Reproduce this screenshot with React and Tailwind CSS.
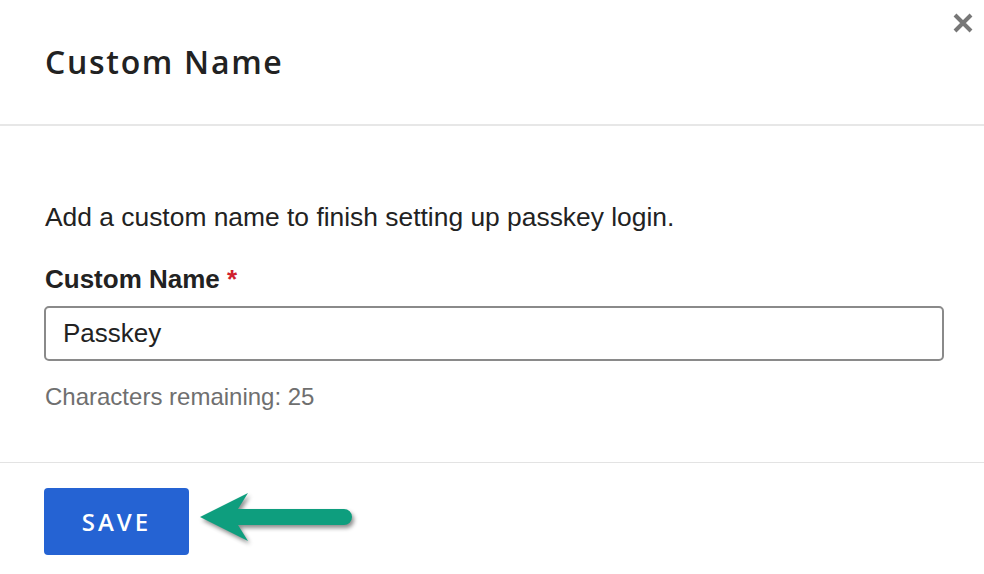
import React, { useState } from 'react';

const MAX_LEN = 32;

function CloseIcon() {
  return (
    <svg width="20" height="20" viewBox="0 0 20 20" fill="none">
      <path d="M2 2 L18 18 M18 2 L2 18" stroke="#777777" strokeWidth="4" strokeLinecap="butt" />
    </svg>
  );
}

function PointerArrow() {
  return (
    <svg
      width="170"
      height="64"
      viewBox="0 0 170 64"
      className="drop-shadow-[2px_3px_2px_rgba(0,0,0,0.45)]"
    >
      {/* head tip at x=2, shaft ends with round cap */}
      <path
        d="M2 27 L50 3 L40 19 L146 19 A8 8 0 0 1 146 35 L40 35 L50 51 Z"
        fill="#0e9e7e"
      />
    </svg>
  );
}

export default function App() {
  const [name, setName] = useState('Passkey');
  const remaining = MAX_LEN - name.length;

  return (
    <div className="relative w-[984px] h-[574px] overflow-hidden bg-white text-[#222222] font-['Liberation_Sans',Arial,sans-serif]">
      <button className="absolute top-[13px] right-[11px] flex items-center justify-center">
        <CloseIcon />
      </button>

      <div className="h-[126px] pl-[45px] pt-[46px] border-b-2 border-[#e7e7e7]">
        <h2 className="text-[32px] leading-[32px] font-semibold tracking-[1.7px] text-[#222222] font-['Open_Sans',sans-serif]">
          Custom Name
        </h2>
      </div>

      <div className="h-[337px] px-[44px] pt-[73px] border-b border-[#e3e3e3]">
        <p className="pl-px text-[26.4px] leading-[36px]">
          Add a custom name to finish setting up passkey login.
        </p>

        <label className="block mt-[26px] pl-px text-[26px] leading-[36px] font-bold">
          Custom Name <span className="text-[#d0202e]">*</span>
        </label>

        <input
          value={name}
          onChange={(e) => setName(e.target.value.slice(0, MAX_LEN))}
          className="mt-[9px] block w-[900px] h-[55px] px-[17px] rounded-[5px] border-2 border-[#8a8a8a] text-[26px] leading-[36px] text-[#222222] outline-none"
        />

        <p className="mt-[20px] pl-px text-[24px] leading-[32px] text-[#6f6f6f]">
          Characters remaining: {remaining}
        </p>
      </div>

      <div className="flex items-center gap-[9px] pl-[44px] pt-[25px]">
        <button className="w-[145px] h-[67px] rounded-[4px] bg-[#2563d3] text-white text-[24px] font-semibold tracking-[3px] font-['Open_Sans',sans-serif]">
          SAVE
        </button>
        <PointerArrow />
      </div>
    </div>
  );
}
